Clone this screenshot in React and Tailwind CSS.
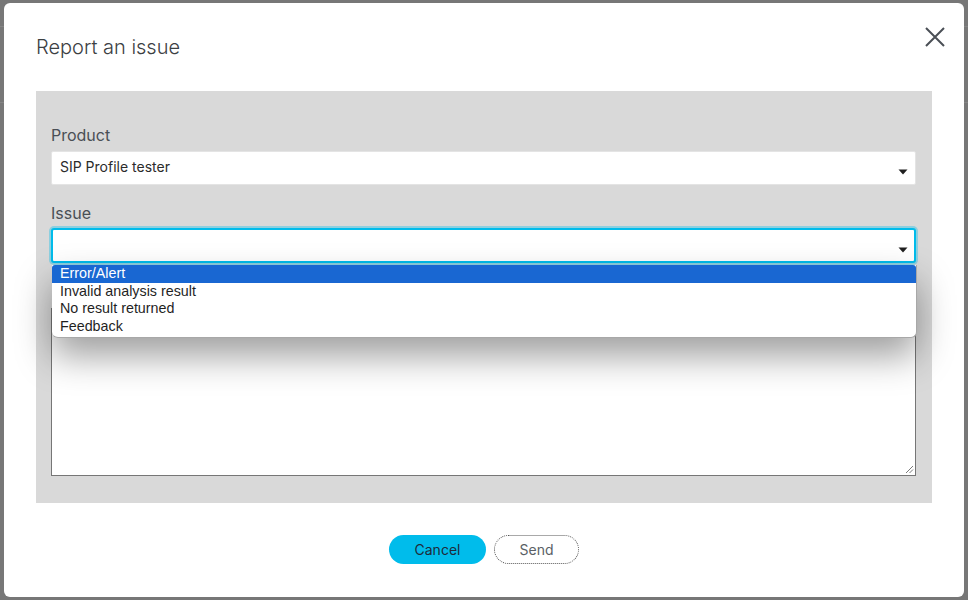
import React from "react";

function Caret() {
  return (
    <svg width="10" height="6" viewBox="0 0 10 6" className="shrink-0">
      <path d="M0.5 0.5 L9.5 0.5 L5 5.5 Z" fill="#1f1f1f" />
    </svg>
  );
}

export default function App() {
  const items = ["Error/Alert", "Invalid analysis result", "No result returned", "Feedback"];
  return (
    <div className="relative w-[968px] h-[600px] overflow-hidden bg-[#777777]" style={{ fontFamily: "Inter, 'Open Sans', sans-serif" }}>
      {/* backdrop page content */}
      <div className="flex flex-col w-full">
        <div className="h-[27px] border-b border-[#858585]"></div>
        <div className="h-[76px] border-b border-[#858585]"></div>
      </div>

      {/* modal */}
      <div className="absolute left-[4px] top-[3px] w-[960px] h-[594px] bg-white rounded-[6px] flex flex-col">
        <div className="flex items-start justify-between pl-[32px] pr-[16px] pt-[31px] h-[88px]">
          <h2 className="text-[20px] leading-[26px] font-light text-[#3c4043]">Report an issue</h2>
          <button className="mt-[-10px] w-[26px] h-[26px] flex items-center justify-center">
            <svg width="22" height="22" viewBox="0 0 22 22">
              <path d="M2 2 L20 20 M20 2 L2 20" stroke="#4a4f55" strokeWidth="2" strokeLinecap="butt" />
            </svg>
          </button>
        </div>

        <div className="mx-[32px] bg-[#d9d9d9] pl-[15px] pr-[16px] pt-[34px] pb-[27px] flex flex-col">
          <label className="text-[16px] leading-[20px] text-[#4a4f55] mb-[6px]">Product</label>
          <div className="h-[34px] bg-white border border-[#e4e4e4] rounded-[2px] flex items-center justify-between pl-[8px] pr-[7px]">
            <span className="text-[14px] leading-[18px] mt-[-2px] text-[#2b2b2b]">SIP Profile tester</span>
            <span className="mt-[8px]"><Caret /></span>
          </div>

          <label className="text-[16px] leading-[20px] text-[#4a4f55] mt-[18px] mb-[5px]">Issue</label>
          <div className="relative">
            <div className="h-[35px] bg-white border-2 border-[#00bceb] rounded-[3px] shadow-[0_0_0_2px_rgba(0,188,235,0.35)] flex items-center justify-end pr-[6px]">
              <span className="mt-[8px]"><Caret /></span>
            </div>
            <ul
              className="absolute left-[1px] right-[-1px] top-[37px] z-10 bg-white rounded-b-[6px] border-b border-r border-[#a8a8a8] shadow-[0_18px_36px_rgba(0,0,0,0.38)] pb-[1px]"
              style={{ fontFamily: "'Liberation Sans', Arial, sans-serif" }}
            >
              {items.map((t, i) => (
                <li
                  key={t}
                  className={
                    "h-[17.7px] leading-[16.7px] text-[14.3px] pl-[8px] " +
                    (i === 0 ? "bg-[#1967d2] text-white rounded-t-[3px]" : "text-[#1f1f1f]")
                  }
                >
                  {t}
                </li>
              ))}
            </ul>
          </div>

          <div className="h-[20px] mt-[19px] mb-[6px]"></div>
          <div className="relative h-[168px] bg-white border border-[#767676]">
            <svg className="absolute right-[1px] bottom-[1px]" width="9" height="9" viewBox="0 0 9 9">
              <path d="M8 1 L1 8 M8 4.5 L4.5 8" stroke="#7a7a7a" strokeWidth="1" />
            </svg>
          </div>
        </div>

        <div className="flex justify-center gap-[8px] mt-[32px]">
          <button className="w-[97px] h-[29px] rounded-full bg-[#00bceb] text-[14px] text-[#1f2b3a]">Cancel</button>
          <button className="w-[85px] h-[29px] rounded-full bg-white border border-dotted border-[#555] text-[14px] text-[#5a5f66]">Send</button>
        </div>
      </div>
    </div>
  );
}
